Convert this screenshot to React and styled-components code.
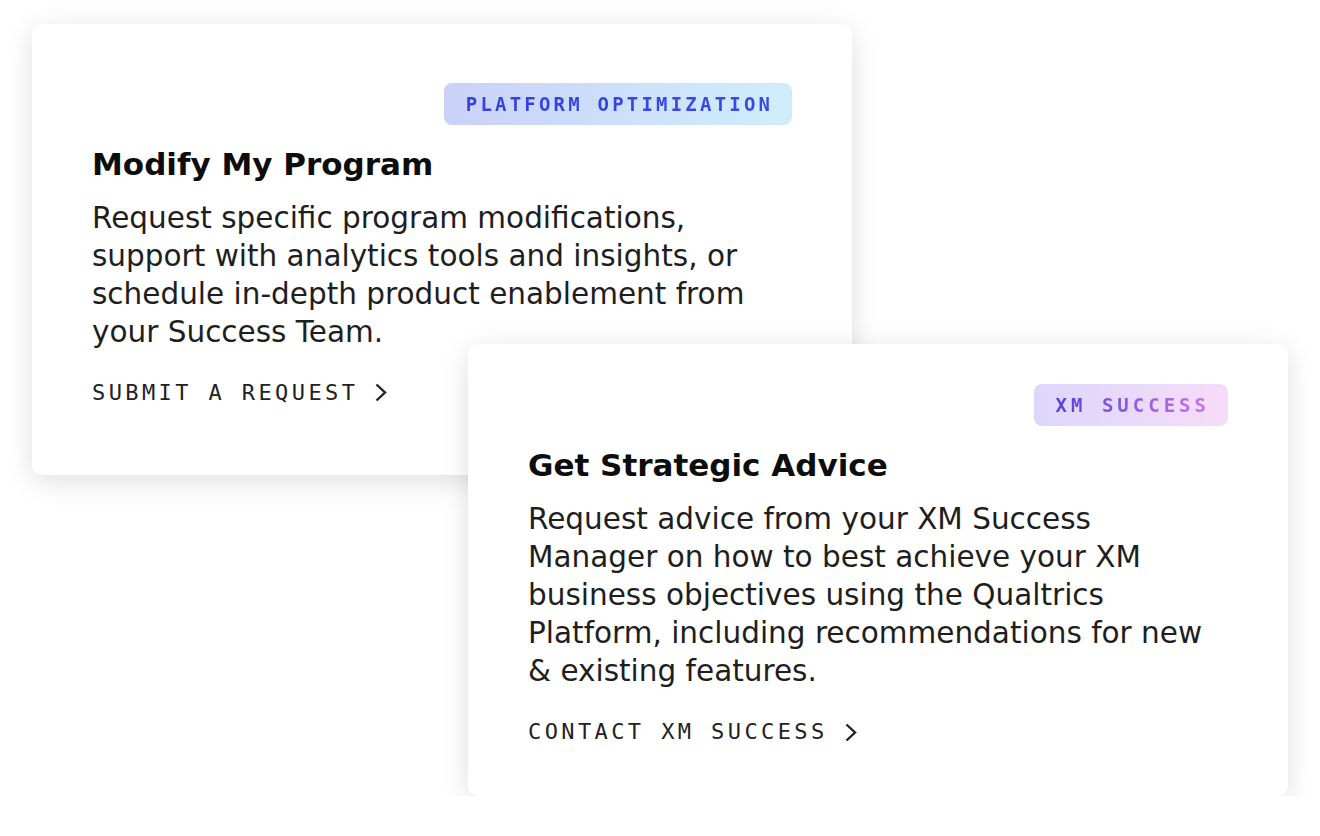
import React from "react";
import styled, { createGlobalStyle } from "styled-components";

const GlobalStyle = createGlobalStyle`
  html, body {
    margin: 0;
    background: #ffffff;
  }
  body {
    font-family: "DejaVu Sans", "Liberation Sans", sans-serif;
    color: #1a1a1a;
  }
`;

const Stage = styled.div`
  display: grid;
  grid-template-columns: 436px 384px 436px;
  grid-template-rows: 320px 131px 321px;
  padding: 24px 0 0 32px;
`;

const Card = styled.div`
  grid-column: ${(p) => p.$col};
  grid-row: ${(p) => p.$row};
  background: #ffffff;
  border-radius: 10px;
  box-shadow: 0 6px 28px rgba(0, 0, 0, 0.13);
  padding: 0 60px 11px;
  display: flex;
  flex-direction: column;
  justify-content: center;
`;

const Badge = styled.div`
  align-self: flex-end;
  height: 42px;
  display: flex;
  align-items: center;
  padding: 0 22px;
  border-radius: 8px;
  background: ${(p) => p.$bg};
`;

const BadgeText = styled.span`
  font-family: "DejaVu Sans Mono", monospace;
  font-size: 19px;
  font-weight: 700;
  letter-spacing: ${(p) => p.$track}px;
  margin-right: -${(p) => p.$track}px;
  background: ${(p) => p.$ink};
  -webkit-background-clip: text;
  background-clip: text;
  color: transparent;
`;

const Title = styled.h2`
  margin: 20px 0 0;
  font-family: "DejaVu Sans", sans-serif;
  font-size: 31px;
  line-height: 38px;
  font-weight: 700;
  color: #0d0d0d;
`;

const Body = styled.p`
  margin: 16px 0 0;
  font-family: "DejaVu Sans", sans-serif;
  font-size: 29.5px;
  line-height: 38px;
  color: #1e1e1e;
`;

const Action = styled.a`
  margin-top: 29px;
  display: flex;
  align-items: center;
  gap: 16px;
  font-family: "DejaVu Sans Mono", monospace;
  font-size: 22px;
  line-height: 26px;
  letter-spacing: 3.4px;
  color: #222222;
  text-decoration: none;
`;

const Chevron = () => (
  <svg width="14" height="19" viewBox="0 0 14 19" fill="none">
    <path d="M2.5 1.5l8.5 8l-8.5 8" stroke="#222" strokeWidth="2.4" />
  </svg>
);

const cards = [
  {
    col: "1 / 3",
    row: "1 / 3",
    badge: "PLATFORM OPTIMIZATION",
    track: 3.2,
    bg: "linear-gradient(90deg, #cad1f7 0%, #cfeefb 100%)",
    ink: "linear-gradient(90deg, #3540df, #3a4ae4)",
    title: "Modify My Program",
    body: "Request specific program modifications, support with analytics tools and insights, or schedule in-depth product enablement from your Success Team.",
    action: "SUBMIT A REQUEST",
  },
  {
    col: "2 / 4",
    row: "2 / 4",
    badge: "XM SUCCESS",
    track: 4,
    bg: "linear-gradient(90deg, #dcd7fb 0%, #f6dcf9 100%)",
    ink: "linear-gradient(90deg, #5a3fd9, #c974e6)",
    title: "Get Strategic Advice",
    body: "Request advice from your XM Success Manager on how to best achieve your XM business objectives using the Qualtrics Platform, including recommendations for new & existing features.",
    action: "CONTACT XM SUCCESS",
  },
];

export default function App() {
  return (
    <>
      <GlobalStyle />
      <Stage>
        {cards.map((c) => (
          <Card key={c.title} $col={c.col} $row={c.row}>
            <Badge $bg={c.bg}>
              <BadgeText $ink={c.ink} $track={c.track}>
                {c.badge}
              </BadgeText>
            </Badge>
            <Title>{c.title}</Title>
            <Body>{c.body}</Body>
            <Action href="#">
              {c.action}
              <Chevron />
            </Action>
          </Card>
        ))}
      </Stage>
    </>
  );
}
